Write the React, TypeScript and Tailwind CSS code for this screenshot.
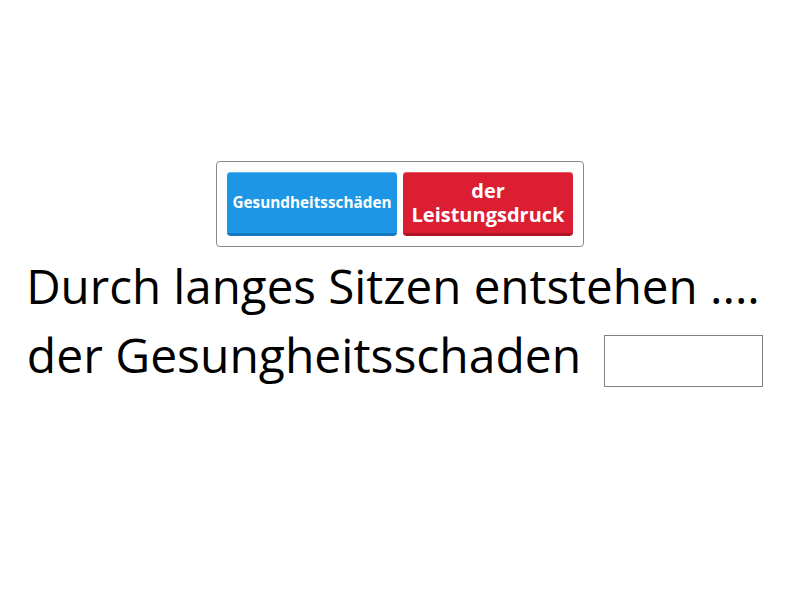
const font = { fontFamily: '"Open Sans", sans-serif' };

const App: React.FC = () => {
  return (
    <div className="w-[800px] h-[600px] bg-white flex flex-col items-center" style={font}>
      <div className="mt-[161px] w-[368px] h-[86px] border border-[#8a8a8a] rounded-[4px] flex items-center gap-[6px] px-[10px]">
        <div className="w-[170px] h-[64px] rounded-[4px] bg-[#1e96e6] border-b-[3px] border-[#1478c0] shadow-[inset_0_1px_0_#5cb8f2] flex items-center justify-center text-white font-bold text-[15.3px] leading-tight">
          Gesundheitsschäden
        </div>
        <div className="w-[170px] h-[64px] rounded-[4px] bg-[#dc1e32] border-b-[3px] border-[#b01426] shadow-[inset_0_1px_0_#ec5a68] flex flex-col items-center justify-center text-center text-white font-bold text-[20px] leading-[24px]">
          <span>der</span>
          <span>Leistungsdruck</span>
        </div>
      </div>
      <div className="mt-[8px] pr-[14px] text-[47.5px] leading-[62px] text-black">Durch langes Sitzen entstehen ....</div>
      <div className="mt-[6px] pr-[10px] flex items-center gap-[23px]">
        <span className="text-[48px] leading-[62px] text-black">der Gesungheitsschaden</span>
        <div className="mt-[12px] w-[159px] h-[52px] border border-[#808080] bg-white" />
      </div>
    </div>
  );
};

export default App;
